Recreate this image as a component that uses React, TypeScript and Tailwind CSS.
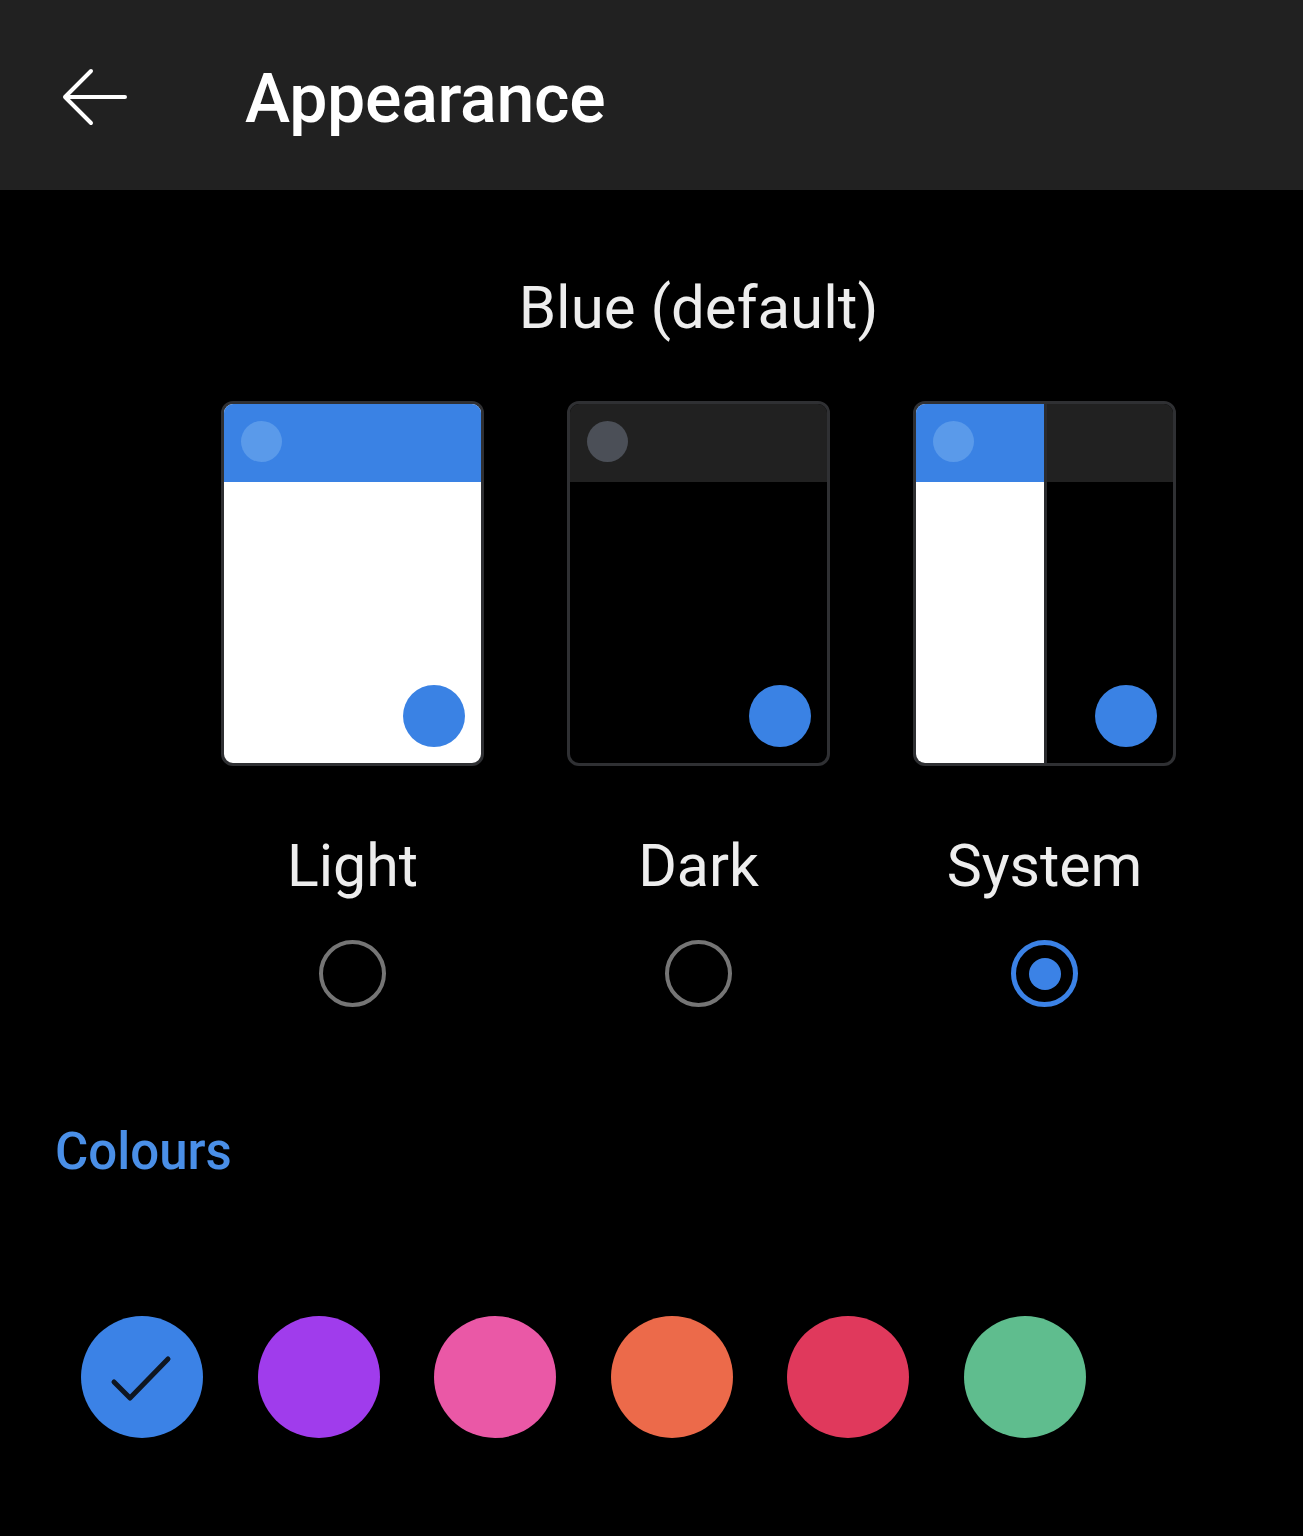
import React from "react";

type Mode = "light" | "dark" | "system";

const swatches = [
  { color: "bg-[#3b82e6]", selected: true },
  { color: "bg-[#a03cec]", selected: false },
  { color: "bg-[#ea58a6]", selected: false },
  { color: "bg-[#ec6a4a]", selected: false },
  { color: "bg-[#e0395c]", selected: false },
  { color: "bg-[#5fbd8e]", selected: false },
];

function Preview({ mode }: { mode: Mode }) {
  if (mode === "system") {
    return (
      <div className="flex h-[365px] w-[263px] overflow-hidden rounded-[12px] border-[3px] border-[#2f3033] bg-black">
        <div className="flex w-[128px] flex-col bg-white">
          <div className="h-[78px] bg-[#3a82e4] pl-[17px] pt-[17px]">
            <div className="h-[41px] w-[41px] rounded-full bg-[#5a9aea]" />
          </div>
        </div>
        <div className="w-[3px] bg-[#2a2b2e]" />
        <div className="flex flex-1 flex-col">
          <div className="h-[78px] bg-[#212121]" />
          <div className="flex flex-1 items-end justify-end p-[16px]">
            <div className="h-[62px] w-[62px] rounded-full bg-[#3a82e4]" />
          </div>
        </div>
      </div>
    );
  }
  const light = mode === "light";
  return (
    <div
      className={`flex h-[365px] w-[263px] flex-col overflow-hidden rounded-[12px] border-[3px] border-[#2f3033] ${
        light ? "bg-white" : "bg-black"
      }`}
    >
      <div className={`h-[78px] pl-[17px] pt-[17px] ${light ? "bg-[#3a82e4]" : "bg-[#212121]"}`}>
        <div className={`h-[41px] w-[41px] rounded-full ${light ? "bg-[#5a9aea]" : "bg-[#4b4f57]"}`} />
      </div>
      <div className="flex flex-1 items-end justify-end p-[16px]">
        <div className="h-[62px] w-[62px] rounded-full bg-[#3a82e4]" />
      </div>
    </div>
  );
}

function Radio({ checked }: { checked: boolean }) {
  return checked ? (
    <div className="flex h-[67px] w-[67px] items-center justify-center rounded-full border-[5px] border-[#3b82e6]">
      <div className="h-[32px] w-[32px] rounded-full bg-[#3b82e6]" />
    </div>
  ) : (
    <div className="h-[67px] w-[67px] rounded-full border-[4px] border-[#757575]" />
  );
}

export default function App() {
  const modes: { key: Mode; label: string }[] = [
    { key: "light", label: "Light" },
    { key: "dark", label: "Dark" },
    { key: "system", label: "System" },
  ];

  return (
    <div className="min-h-[1536px] w-[1303px] bg-black font-['Roboto',sans-serif] text-white">
      {/* Top bar */}
      <div className="flex h-[190px] items-center bg-[#212121]">
        <svg
          width="66"
          height="58"
          viewBox="0 0 66 58"
          fill="none"
          stroke="white"
          strokeWidth="4"
          strokeLinecap="round"
          strokeLinejoin="round"
          className="ml-[61px] mt-[3px]"
        >
          <path d="M64 29H4M30 3L4 29l26 26" />
        </svg>
        <h1 className="ml-[118px] mt-[7px] text-[68px] font-medium leading-none tracking-[-0.3px]">Appearance</h1>
      </div>

      {/* Theme chooser */}
      <div className="pl-[221px]">
        <div className="w-[955px] pt-[88px] text-center text-[60px] leading-none text-[#ededed]">
          Blue (default)
        </div>
        <div className="mt-[63px] flex gap-[83px]">
          {modes.map((m) => (
            <div key={m.key} className="flex w-[263px] flex-col items-center">
              <Preview mode={m.key} />
              <div className="mt-[70px] text-[59px] leading-none text-[#ededed]">{m.label}</div>
              <div className="mt-[45px]">
                <Radio checked={m.key === "system"} />
              </div>
            </div>
          ))}
        </div>
      </div>

      {/* Colours */}
      <div className="pl-[55px] pt-[119px] text-[51px] font-medium leading-none text-[#4a8fe7]">Colours</div>
      <div className="mt-[139px] flex gap-[54.5px] pl-[81px]">
        {swatches.map((s, i) => (
          <div key={i} className={`flex h-[122px] w-[122px] items-center justify-center rounded-full ${s.color}`}>
            {s.selected && (
              <svg width="122" height="122" viewBox="0 0 122 122" fill="none">
                <path
                  d="M33 66l16 16 38-39"
                  stroke="#0f1620"
                  strokeWidth="5"
                  strokeLinecap="round"
                  strokeLinejoin="round"
                />
              </svg>
            )}
          </div>
        ))}
      </div>
    </div>
  );
}
